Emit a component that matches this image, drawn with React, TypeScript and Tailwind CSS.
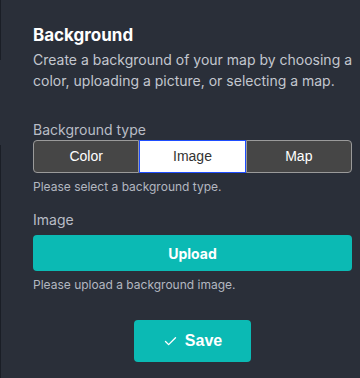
import { Check } from 'lucide-react'

const TYPES = ['Color', 'Image', 'Map']

export default function App() {
  const selected = 'Image'

  return (
    <div className="h-[378px] w-[360px] overflow-hidden bg-[#2a2f39] relative font-['Inter',sans-serif]">
      <div className="absolute left-0 top-0 h-[60px] w-px bg-[#1a1e26]" />
      <div className="absolute left-0 top-[145px] h-[233px] w-px bg-[#1a1e26]" />
      <div className="pl-[33px] pr-[8px] pt-[24px]">
        <h2 className="text-[17px] font-bold leading-[22px] text-white">Background</h2>
        <p className="mt-[3px] text-[14px] leading-[21px] text-[#c3c7cf]">
          Create a background of your map by choosing a color, uploading a picture, or selecting a map.
        </p>

        <div className="mt-[30px] text-[14px] leading-[18px] text-[#b9bdc6]">Background type</div>
        <div className="mt-[1px] flex h-[33px] font-['Liberation_Sans',Arial,sans-serif] text-[14px]">
          {TYPES.map((t, i) => {
            const on = t === selected
            return (
              <button
                key={t}
                className={`flex-1 ${on ? 'bg-white text-[#333] border-[1.5px] border-[#1e4dff]' : 'bg-[#464646] text-white border border-[#9a9a9a]'} ${i === 0 ? 'rounded-l-[4px]' : ''} ${i === TYPES.length - 1 ? 'rounded-r-[4px]' : ''}`}
              >
                {t}
              </button>
            )
          })}
        </div>
        <p className="mt-[6px] text-[12px] leading-[16px] text-[#b3b7c0]">Please select a background type.</p>

        <div className="mt-[16px] text-[14px] leading-[18px] text-[#b9bdc6]">Image</div>
        <button className="mt-[6px] h-[36px] w-full rounded-[4px] bg-[#0bbab4] text-[14px] font-bold text-white">
          Upload
        </button>
        <p className="mt-[6px] text-[12px] leading-[16px] text-[#b3b7c0]">Please upload a background image.</p>

        <div className="mt-[27px] flex justify-center">
          <button className="flex h-[42px] w-[117px] items-center justify-center gap-[7px] rounded-[4px] bg-[#0bbab4] font-['Liberation_Sans',Arial,sans-serif] text-[16px] font-bold text-white">
            <Check size={15} strokeWidth={2.2} />
            Save
          </button>
        </div>
      </div>
    </div>
  )
}
